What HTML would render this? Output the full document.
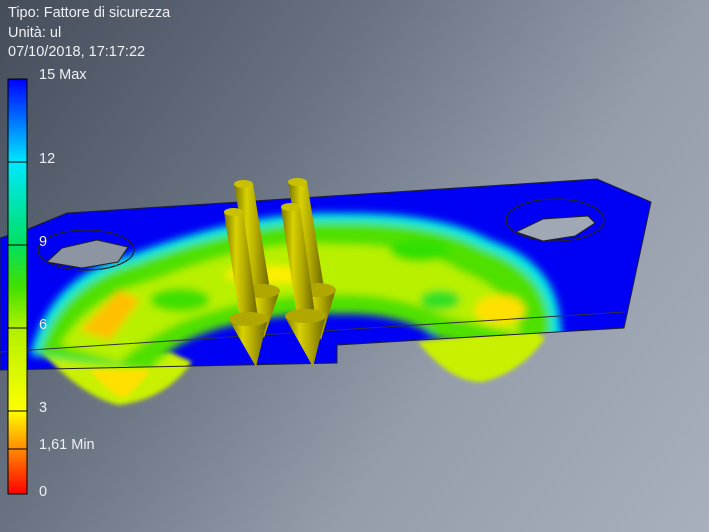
<!DOCTYPE html>
<html><head><meta charset="utf-8"><style>
html,body{margin:0;padding:0}
body{width:709px;height:532px;overflow:hidden;position:relative;font-family:"Liberation Sans",sans-serif;
background:linear-gradient(125deg,#454d5b 0%,#6a7382 35%,#959dab 65%,#a8b0bd 100%);}
.t{position:absolute;color:#eef0f4;font-size:14.5px;line-height:14px;white-space:nowrap}
</style></head><body>
<svg width="709" height="532" style="position:absolute;left:0;top:0">
<defs>
<filter id="b" x="-20%" y="-20%" width="140%" height="140%"><feGaussianBlur stdDeviation="4"/></filter>
<filter id="b2"><feGaussianBlur stdDeviation="2"/></filter>
<linearGradient id="leg" x1="0" y1="0" x2="0" y2="1">
<stop offset="0" stop-color="#0000ff"/><stop offset="0.2" stop-color="#00e8ff"/>
<stop offset="0.4" stop-color="#00e060"/><stop offset="0.5" stop-color="#40e000"/>
<stop offset="0.6" stop-color="#b0f000"/><stop offset="0.8" stop-color="#ffff00"/>
<stop offset="0.85" stop-color="#ffc000"/><stop offset="0.9" stop-color="#ff8000"/>
<stop offset="1" stop-color="#ff0000"/></linearGradient>
<linearGradient id="sh" x1="0" y1="0" x2="1" y2="0">
<stop offset="0" stop-color="#7a7400"/><stop offset="0.35" stop-color="#d8d200"/><stop offset="0.6" stop-color="#b5ad00"/><stop offset="1" stop-color="#6a6400"/></linearGradient>
<clipPath id="pc"><polygon points="0,238 28,229 67,213 597,179 651,202 624,328 337,345 337,363 0,370"/></clipPath>
</defs>
<polygon points="0,238 28,229 67,213 597,179 651,202 624,328 337,345 337,363 0,370" fill="#0000f4"/>
<!-- hanging blobs -->
<path d="M40,350 Q80,395 118,405 Q165,400 192,362 L170,352 Z" fill="#c8f000" filter="url(#b2)"/>
<path d="M90,370 Q110,395 125,398 Q140,385 150,370 Z" fill="#ffe000" filter="url(#b2)"/>
<path d="M418,342 Q450,382 482,382 Q522,372 545,338 L530,328 Z" fill="#c8f000" filter="url(#b2)"/>
<g clip-path="url(#pc)">
<g filter="url(#b)">
<path d="M30,355 Q50,275 130,255 Q250,210 340,213 Q440,212 490,240 Q555,262 560,320 L565,365 Q500,345 430,335 Q400,305 340,305 Q280,305 220,320 Q170,335 150,370 Z" fill="#00e8e0"/>
<path d="M38,355 Q60,282 138,262 Q250,220 340,222 Q435,222 482,248 Q545,270 550,322 L550,370 Q490,348 438,338 Q400,312 340,314 Q280,312 220,328 Q170,343 150,370 Z" fill="#50e000"/>
<path d="M60,345 Q90,295 155,280 Q260,238 340,245 Q420,245 462,272 Q515,292 520,335 Q480,325 440,315 Q390,290 320,295 Q250,295 180,322 Q140,342 120,362 Z" fill="#b8f000"/>
<path d="M80,330 L120,290 L140,300 L110,340 Z" fill="#ffc000"/>
<ellipse cx="270" cy="275" rx="45" ry="9" fill="#ffee00"/>
<ellipse cx="420" cy="250" rx="30" ry="12" fill="#30e000"/>
<ellipse cx="180" cy="300" rx="30" ry="12" fill="#40e000"/>
<ellipse cx="500" cy="310" rx="25" ry="15" fill="#ffe000"/>
<ellipse cx="440" cy="300" rx="20" ry="10" fill="#30e020"/>
</g>
</g>
<polygon points="0,238 28,229 67,213 597,179 651,202 624,328 337,345 337,363 0,370" fill="none" stroke="#202030" stroke-width="1"/>
<polyline points="0,352 337,330 624,312" fill="none" stroke="#303040" stroke-width="1"/>
<!-- holes -->
<ellipse cx="86" cy="250" rx="48" ry="20" fill="none" stroke="#222" stroke-width="1.2"/>
<polygon points="47,262 62,248 97,240 128,247 118,262 82,268" fill="#8d95a2" stroke="#222" stroke-width="1"/>
<ellipse cx="555" cy="220" rx="49" ry="21" fill="none" stroke="#222" stroke-width="1.2"/>
<polygon points="516,232 543,219 588,216 595,223 575,236 543,241" fill="#a0a8b5" stroke="#222" stroke-width="1"/>
<!-- arrows -->
<g>
<polygon points="234,184 253,184 270,290 252,292" fill="url(#sh)"/>
<ellipse cx="243.5" cy="184" rx="9.5" ry="4" fill="#c8c000"/>
<polygon points="244,292 280,290 264,338" fill="url(#sh)"/>
<ellipse cx="262" cy="291" rx="18" ry="7" fill="#b0a800"/>
<polygon points="288,182 307,182 324,288 306,290" fill="url(#sh)"/>
<ellipse cx="297.5" cy="182" rx="9.5" ry="4" fill="#c8c000"/>
<polygon points="298,291 336,289 321,340" fill="url(#sh)"/>
<ellipse cx="317" cy="290" rx="19" ry="7" fill="#b0a800"/>
<polygon points="224,212 243,212 258,318 240,320" fill="url(#sh)"/>
<ellipse cx="233.5" cy="212" rx="9.5" ry="4" fill="#c8c000"/>
<polygon points="229,320 268,318 256,367" fill="url(#sh)"/>
<ellipse cx="248.5" cy="319" rx="19.5" ry="7" fill="#b0a800"/>
<polygon points="281,207 300,207 315,315 297,317" fill="url(#sh)"/>
<ellipse cx="290.5" cy="207" rx="9.5" ry="4" fill="#c8c000"/>
<polygon points="285,317 326,315 313,367" fill="url(#sh)"/>
<ellipse cx="305.5" cy="316" rx="20.5" ry="7" fill="#b0a800"/>
</g>
<rect x="8" y="79" width="19" height="415" fill="url(#leg)" stroke="#000" stroke-width="1"/>
<g stroke="#000" stroke-width="1"><line x1="8" y1="162" x2="27" y2="162"/><line x1="8" y1="245" x2="27" y2="245"/><line x1="8" y1="328" x2="27" y2="328"/><line x1="8" y1="411" x2="27" y2="411"/><line x1="8" y1="449" x2="27" y2="449"/></g>
</svg>
<div class="t" style="left:8px;top:6px">Tipo: Fattore di sicurezza</div>
<div class="t" style="left:8px;top:26px">Unità: ul</div>
<div class="t" style="left:8px;top:45px">07/10/2018, 17:17:22</div>
<div class="t" style="left:39px;top:68px">15 Max</div>
<div class="t" style="left:39px;top:152px">12</div>
<div class="t" style="left:39px;top:235px">9</div>
<div class="t" style="left:39px;top:318px">6</div>
<div class="t" style="left:39px;top:401px">3</div>
<div class="t" style="left:39px;top:438px">1,61 Min</div>
<div class="t" style="left:39px;top:485px">0</div>
</body></html>
